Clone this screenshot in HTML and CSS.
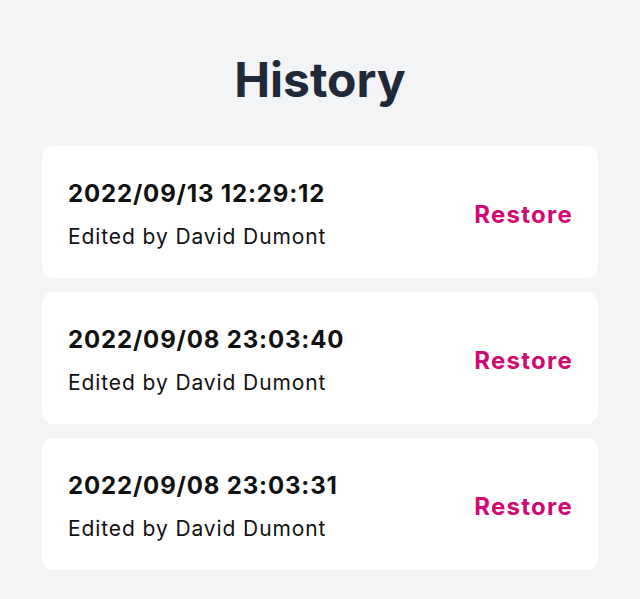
FILE: index.html
```html
<!DOCTYPE html>
<html lang="en">
<head>
<meta charset="utf-8">
<title>History</title>
<link rel="stylesheet" href="styles.css">
</head>
<body>
<main class="page">
  <h1 class="title">History</h1>
  <ul class="list">
    <li class="card">
      <div class="info">
        <div class="date">2022/09/13 12:29:12</div>
        <div class="author">Edited by David Dumont</div>
      </div>
      <button class="restore" type="button">Restore</button>
    </li>
    <li class="card">
      <div class="info">
        <div class="date">2022/09/08 23:03:40</div>
        <div class="author">Edited by David Dumont</div>
      </div>
      <button class="restore" type="button">Restore</button>
    </li>
    <li class="card">
      <div class="info">
        <div class="date">2022/09/08 23:03:31</div>
        <div class="author">Edited by David Dumont</div>
      </div>
      <button class="restore" type="button">Restore</button>
    </li>
  </ul>
</main>
</body>
</html>
```

FILE: styles.css
```css
html, body {
  margin: 0;
  padding: 0;
  background: #f3f4f6;
}
body {
  font-family: Inter, "Noto Sans", sans-serif;
  color: #111;
}
.page {
  padding: 56px 42px 29px;
}
.title {
  margin: 0 0 42px;
  font-size: 48px;
  line-height: 48px;
  font-weight: 700;
  text-align: center;
  color: #1f2937;
}
.list {
  list-style: none;
  margin: 0;
  padding: 0;
  display: flex;
  flex-direction: column;
  gap: 14px;
}
.card {
  background: #fff;
  border-radius: 12px;
  height: 132px;
  box-sizing: border-box;
  padding: 5px 26px 0;
  display: flex;
  align-items: center;
  justify-content: space-between;
}
.info {
  display: flex;
  flex-direction: column;
  gap: 13.5px;
}
.date {
  font-size: 24px;
  line-height: 32px;
  font-weight: 700;
  letter-spacing: 0.85px;
  color: #111;
}
.author {
  font-size: 21px;
  line-height: 28px;
  font-weight: 400;
  letter-spacing: 0.9px;
  color: #111;
}
.restore {
  border: 0;
  background: none;
  padding: 0;
  margin-right: -1px;
  font-family: inherit;
  font-size: 24px;
  line-height: 32px;
  font-weight: 700;
  letter-spacing: 1.25px;
  color: #cf0a72;
  cursor: pointer;
}
```
